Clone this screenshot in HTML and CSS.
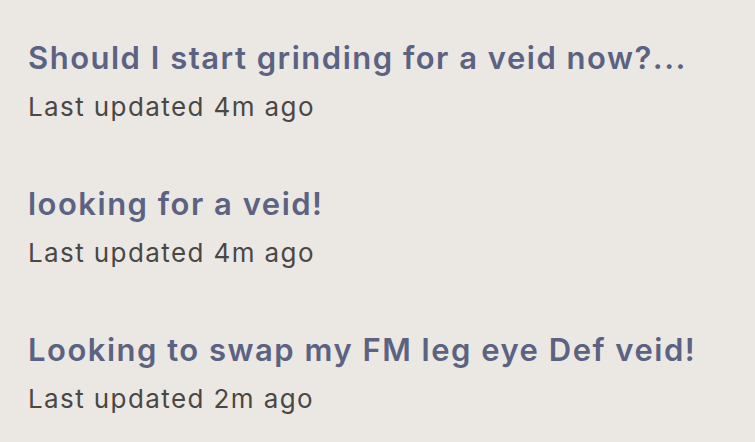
FILE: index.html
```html
<!DOCTYPE html>
<html>
<head>
<meta charset="utf-8">
<link rel="stylesheet" href="styles.css">
</head>
<body>
<ul class="list">
  <li class="item">
    <div class="title">Should I start grinding for a veid now?...</div>
    <div class="meta">Last updated 4m ago</div>
  </li>
  <li class="item">
    <div class="title">looking for a veid!</div>
    <div class="meta">Last updated 4m ago</div>
  </li>
  <li class="item">
    <div class="title">Looking to swap my FM leg eye Def veid!</div>
    <div class="meta">Last updated 2m ago</div>
  </li>
</ul>
</body>
</html>
```

FILE: styles.css
```css
html, body {
  margin: 0;
  padding: 0;
  background: #ebe8e3;
  height: 100%;
  overflow: hidden;
}
.list {
  list-style: none;
  margin: 0;
  padding: 38px 0 0 28px;
  display: flex;
  flex-direction: column;
  gap: 60px;
  font-family: Inter, "Open Sans", sans-serif;
}
.item {
  display: flex;
  flex-direction: column;
  gap: 12px;
}
.title {
  font-size: 31px;
  font-weight: 600;
  color: #5b6282;
  line-height: 40px;
  letter-spacing: 1.5px;
  white-space: nowrap;
}
.meta {
  font-size: 26px;
  font-weight: 400;
  color: #4a4744;
  line-height: 34px;
  letter-spacing: 1.4px;
  white-space: nowrap;
}
```
